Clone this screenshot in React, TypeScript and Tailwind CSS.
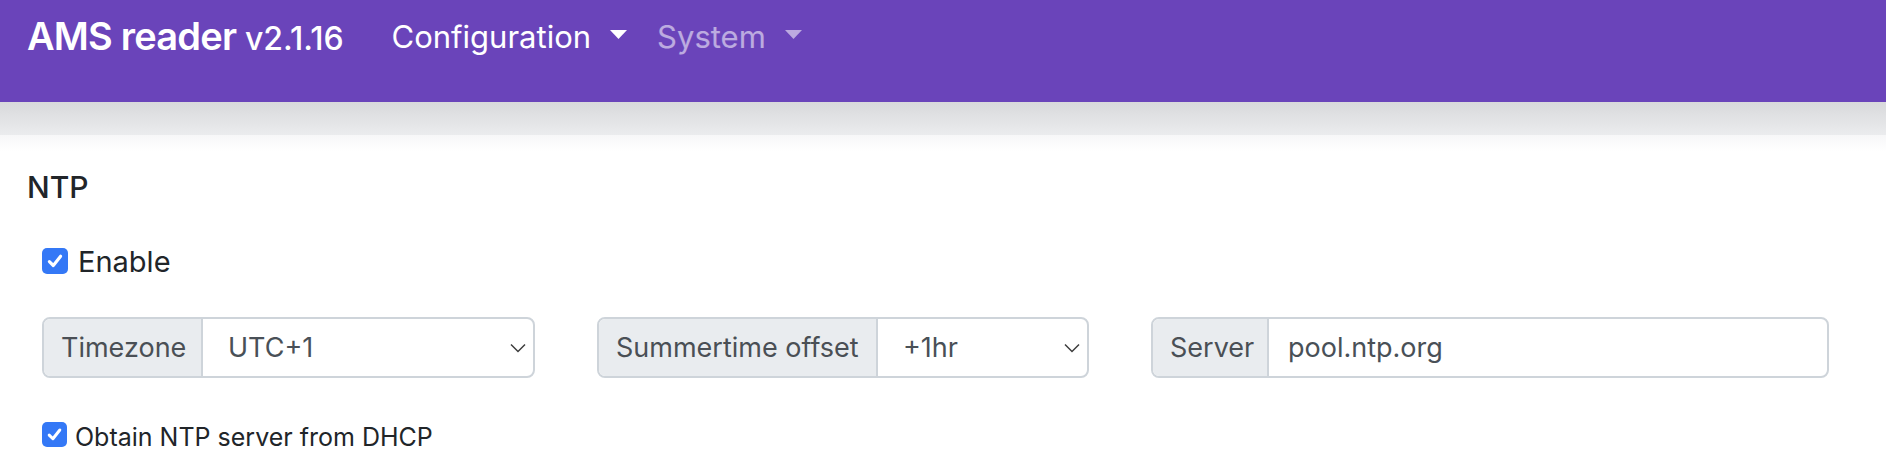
import React from 'react'

const font = { fontFamily: 'Inter, "Noto Sans", sans-serif' }

function Caret({ light }: { light?: boolean }) {
  return (
    <svg width="17" height="9" viewBox="0 0 17 9" className="ml-[19px] -mt-[4px]">
      <path d="M0 0 L17 0 L8.5 9 Z" fill={light ? 'rgba(255,255,255,0.55)' : '#ffffff'} />
    </svg>
  )
}

function Check({ size }: { size: number }) {
  return (
    <span
      className="flex items-center justify-center rounded-[5px] bg-[#3478f6] shrink-0"
      style={{ width: size, height: size }}
    >
      <svg width={size - 8} height={size - 8} viewBox="0 0 16 16">
        <path d="M3 8.6 L6.5 12 L13 3.8" fill="none" stroke="#fff" strokeWidth="2.8" strokeLinecap="round" strokeLinejoin="round" />
      </svg>
    </span>
  )
}

function Chevron() {
  return (
    <svg width="16" height="10" viewBox="0 0 16 10" className="shrink-0">
      <path d="M1 1.5 L8 8.5 L15 1.5" fill="none" stroke="#3d3d3d" strokeWidth="1.5" />
    </svg>
  )
}

function Group({ label, addonW, width, value, select, valuePad }: { label: string; addonW: string; width: string; value: string; select?: boolean; valuePad: string }) {
  return (
    <div className={`flex h-[61px] ${width} border-2 border-[#ced4da] rounded-[8px] overflow-hidden bg-white`}>
      <span className={`flex items-center ${addonW} pl-[17px] bg-[#e9ecef] border-r-2 border-[#ced4da] text-[27px] text-[#4a4f55] leading-none`}>
        {label}
      </span>
      <div className={`flex flex-1 items-center ${valuePad} pr-[7px] text-[27px] text-[#495057] leading-none`}>
        <span className="flex-1">{value}</span>
        {select && <Chevron />}
      </div>
    </div>
  )
}

export default function App() {
  return (
    <div className="w-[1886px] h-[474px] bg-white overflow-hidden" style={font}>
      <header className="flex items-start h-[102px] bg-[#6a44ba] pl-[27px]">
        <div className="pt-[17px] text-[38px] leading-none font-semibold text-white tracking-[-0.8px]">
          AMS reader <span className="text-[32px] font-medium tracking-normal">v2.1.16</span>
        </div>
        <nav className="flex items-center pt-[21px] ml-[48px] text-[31px] leading-none text-white">
          <span className="flex items-center">
            Configuration
            <Caret />
          </span>
          <span className="flex items-center ml-[30px] text-white/55">
            System
            <Caret light />
          </span>
        </nav>
      </header>
      <div className="h-[33px] bg-gradient-to-b from-[#d8d9db] to-[#ebecee]" />
      <div className="h-[16px] -mb-[16px] bg-gradient-to-b from-[#f7f7f8] to-white" />
      <section className="pl-[27px] text-[#212529]">
        <h5 className="mt-[37px] text-[30px] leading-none font-medium">NTP</h5>
        <div className="pl-[15px]">
          <label className="flex items-center mt-[44px] h-[30px] text-[29px] leading-none">
            <Check size={26} />
            <span className="ml-[10px]">Enable</span>
          </label>
          <div className="flex mt-[41px] gap-[62px]">
            <Group label="Timezone" addonW="w-[159px]" width="w-[493px]" value="UTC+1" select valuePad="pl-[25px]" />
            <Group label="Summertime offset" addonW="w-[279px]" width="w-[492px]" value="+1hr" select valuePad="pl-[25px]" />
            <Group label="Server" addonW="w-[116px]" width="w-[678px]" value="pool.ntp.org" valuePad="pl-[19px]" />
          </div>
          <label className="flex items-start mt-[44px] text-[25px] leading-none">
            <Check size={25} />
            <span className="ml-[8px] mt-[3px]">Obtain NTP server from DHCP</span>
          </label>
        </div>
      </section>
    </div>
  )
}
